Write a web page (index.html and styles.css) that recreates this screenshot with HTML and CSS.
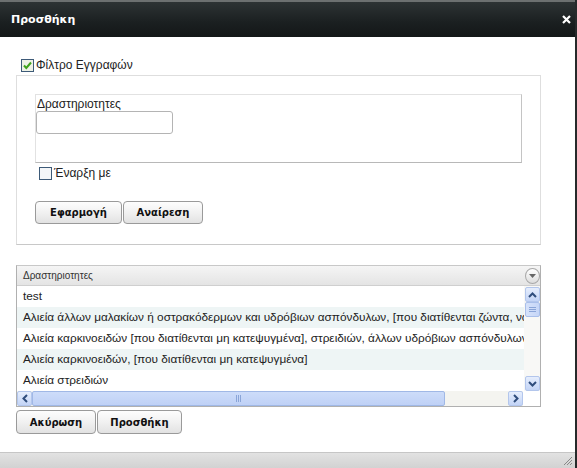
FILE: index.html
```html
<!DOCTYPE html>
<html lang="el">
<head>
  <meta charset="UTF-8">
  <title>Προσθήκη</title>
  <link rel="stylesheet" href="styles.css">
</head>
<body>

<div class="dialog">
  <div class="titlebar">
    <span class="title">Προσθήκη</span>
    <svg class="close" width="9" height="9" viewBox="0 0 9 9"><path d="M1 1 L8 8 M8 1 L1 8" stroke="#fff" stroke-width="2.2"/></svg>
  </div>

  <div class="content">
    <label class="check-row">
      <svg class="box" width="13" height="13" viewBox="0 0 13 13">
        <rect x="0.5" y="0.5" width="12" height="12" fill="#eef2e6" stroke="#3d5a78"/>
        <path d="M3 6.5 L5.3 9 L10 3.5" fill="none" stroke="#3fa31c" stroke-width="2"/>
      </svg>
      Φίλτρο Εγγραφών
    </label>

    <div class="filter-box">
      <div class="field-panel">
        <div class="field-label">Δραστηριοτητες</div>
        <input class="field-input" type="text">
      </div>
      <label class="check-row starts">
        <svg class="box" width="13" height="13" viewBox="0 0 13 13">
          <rect x="0.5" y="0.5" width="12" height="12" fill="#f4f6f8" stroke="#3d5a78"/>
        </svg>
        Έναρξη με
      </label>
      <div class="buttons">
        <button class="btn btn-apply">Εφαρμογή</button>
        <button class="btn btn-reset">Αναίρεση</button>
      </div>
    </div>

    <div class="grid">
      <div class="grid-header">
        <span>Δραστηριοτητες</span>
        <span class="col-menu">
          <svg width="7" height="4" viewBox="0 0 7 4"><path d="M0 0 H7 L3.5 4 Z" fill="#666"/></svg>
        </span>
      </div>
      <div class="grid-main">
        <div class="rows">
          <div class="row">test</div>
          <div class="row alt">Αλιεία άλλων μαλακίων ή οστρακόδερμων και υδρόβιων ασπόνδυλων, [που διατίθενται ζώντα, νωπά ή διατηρημένα]</div>
          <div class="row">Αλιεία καρκινοειδών [που διατίθενται μη κατεψυγμένα], στρειδιών, άλλων υδρόβιων ασπόνδυλων</div>
          <div class="row alt">Αλιεία καρκινοειδών, [που διατίθενται μη κατεψυγμένα]</div>
          <div class="row">Αλιεία στρειδιών</div>
        </div>
        <div class="vscroll">
          <span class="sb-btn">
            <svg width="9" height="6" viewBox="0 0 9 6"><path d="M1 5 L4.5 1.5 L8 5" fill="none" stroke="#2f4d7c" stroke-width="2"/></svg>
          </span>
          <span class="v-thumb"><i></i><i></i><i></i></span>
          <span class="v-track"></span>
          <span class="sb-btn">
            <svg width="9" height="6" viewBox="0 0 9 6"><path d="M1 1 L4.5 4.5 L8 1" fill="none" stroke="#2f4d7c" stroke-width="2"/></svg>
          </span>
        </div>
      </div>
      <div class="hscroll">
        <span class="sb-btn">
          <svg width="6" height="9" viewBox="0 0 6 9"><path d="M5 1 L1.5 4.5 L5 8" fill="none" stroke="#2f4d7c" stroke-width="2"/></svg>
        </span>
        <span class="h-thumb"><i></i><i></i><i></i></span>
        <span class="h-track"></span>
        <span class="sb-btn">
          <svg width="6" height="9" viewBox="0 0 6 9"><path d="M1 1 L4.5 4.5 L1 8" fill="none" stroke="#2f4d7c" stroke-width="2"/></svg>
        </span>
        <span class="corner"></span>
      </div>
    </div>

    <div class="buttons footer-buttons">
      <button class="btn btn-cancel">Ακύρωση</button>
      <button class="btn btn-add">Προσθήκη</button>
    </div>
  </div>

  <div class="statusbar">
    <svg class="grip" width="11" height="11" viewBox="0 0 11 11">
      <path d="M10 2 L2 10 M10 5 L5 10 M10 8 L8 10" stroke="#888" stroke-width="1"/>
    </svg>
  </div>
</div>

</body>
</html>
```

FILE: styles.css
```css
body {
  margin: 0;
  font-family: "Liberation Sans", Arial, sans-serif;
  font-size: 12px;
  color: #222;
}
.dialog {
  width: 577px;
  height: 468px;
  box-sizing: border-box;
  border-right: 2px solid #262a2b;
  display: flex;
  flex-direction: column;
  background: #fff;
}

/* window title */
.titlebar {
  height: 37px;
  box-sizing: border-box;
  border-top: 2px solid #6c7070;
  background: linear-gradient(#2d3334, #1a1f20 60%, #131718);
  color: #fff;
  display: flex;
  align-items: center;
  justify-content: space-between;
  padding: 0 4px 0 11px;
}
.title {
  font-family: "DejaVu Sans", sans-serif;
  font-weight: bold;
  font-size: 11px;
}

.content {
  flex: 1;
  padding: 20px 0 0 16px;
}
.check-row {
  display: flex;
  align-items: center;
  gap: 2px;
  margin-left: 5px;
  height: 16px;
}
.box {
  flex: none;
}

/* filter fieldset */
.filter-box {
  width: 525px;
  box-sizing: border-box;
  margin-top: 2px;
  border: 1px solid #dedede;
  border-bottom-color: #c8c8c8;
  padding: 18px 0 20px 18px;
}
.field-panel {
  width: 487px;
  height: 69px;
  box-sizing: border-box;
  border: 1px solid #e2e2e2;
  border-right-color: #c4c4c4;
  border-bottom-color: #b8b8b8;
  padding-top: 2px;
}
.field-label {
  padding-left: 1px;
  line-height: 14px;
}
.field-input {
  display: block;
  width: 137px;
  height: 23px;
  box-sizing: border-box;
  margin: 0;
  border: 1px solid #b4b4b4;
  border-radius: 3px;
  background: #fff;
}
.check-row.starts {
  margin: 2px 0 0 4px;
}
.buttons {
  display: flex;
  gap: 1px;
  margin-top: 20px;
}
.btn {
  height: 23px;
  padding: 0;
  border: 1px solid #9a9a9a;
  border-radius: 4px;
  background: linear-gradient(#fdfdfd, #f1f1f1 50%, #e2e2e2);
  font-family: "DejaVu Sans", sans-serif;
  font-weight: bold;
  font-size: 10px;
  color: #111;
}
.btn-apply { width: 87px; }
.btn-reset { width: 80px; }
.btn-cancel { width: 80px; }
.btn-add { width: 85px; }

/* activities grid */
.grid {
  width: 525px;
  box-sizing: border-box;
  margin-top: 20px;
  border: 1px solid #b0b0b0;
  border-top-color: #c8c8c8;
}
.grid-header {
  height: 19px;
  display: flex;
  align-items: center;
  justify-content: space-between;
  padding-left: 6px;
  background: linear-gradient(#f5f5f5, #e4e4e4);
  border-bottom: 1px solid #cfcfcf;
  font-size: 10px;
  color: #333;
}
.col-menu {
  width: 13px;
  height: 14px;
  border: 1px solid #a8a8a8;
  border-radius: 50%;
  background: linear-gradient(#fff, #dcdcdc);
  display: flex;
  align-items: center;
  justify-content: center;
}
.grid-main {
  display: flex;
  height: 105px;
}
.rows {
  flex: 1;
  overflow: hidden;
}
.row {
  height: 21px;
  line-height: 21px;
  padding-left: 6px;
  font-size: 11.8px;
  white-space: nowrap;
  overflow: hidden;
}
.row.alt {
  background: #eef5f5;
}

/* scrollbars */
.vscroll {
  width: 16px;
  display: flex;
  flex-direction: column;
  background: #f8f8f6;
}
.sb-btn {
  flex: none;
  width: 15px;
  height: 15px;
  box-sizing: border-box;
  border: 1px solid #b3c6ec;
  border-radius: 2px;
  background: linear-gradient(#e6eefd, #c3d4f6);
  display: flex;
  align-items: center;
  justify-content: center;
}
.vscroll .sb-btn { margin: 1px 0 0 1px; }
.v-thumb {
  flex: none;
  height: 15px;
  margin-left: 1px;
  width: 15px;
  box-sizing: border-box;
  border: 1px solid #a9bfea;
  border-radius: 2px;
  background: linear-gradient(90deg, #d6e2fa, #c6d6f7);
  display: flex;
  flex-direction: column;
  align-items: center;
  justify-content: center;
  gap: 1px;
}
.v-thumb i {
  display: block;
  width: 7px;
  height: 1px;
  background: #8aa5d8;
}
.v-track {
  flex: 1;
}
.hscroll {
  display: flex;
  height: 15px;
  background: #f4f4f0;
}
.h-thumb {
  width: 413px;
  box-sizing: border-box;
  border: 1px solid #a0b8e6;
  border-radius: 2px;
  background: linear-gradient(#cddcf9, #bfd1f6);
  display: flex;
  align-items: center;
  justify-content: center;
  gap: 1px;
}
.h-thumb i {
  display: block;
  width: 1px;
  height: 7px;
  background: #8aa5d8;
}
.h-track {
  flex: 1;
}
.corner {
  width: 17px;
  background: #fff;
}
.footer-buttons {
  margin-top: 3px;
}
.footer-buttons .btn {
  height: 24px;
}

/* bottom bar with resize grip */
.statusbar {
  height: 15px;
  border-top: 1px solid #c6c6c6;
  background: linear-gradient(#e2e2e2, #d2d2d2);
  display: flex;
  justify-content: flex-end;
  align-items: flex-end;
  padding-right: 2px;
}
.grip {
  margin-bottom: 2px;
}
```
